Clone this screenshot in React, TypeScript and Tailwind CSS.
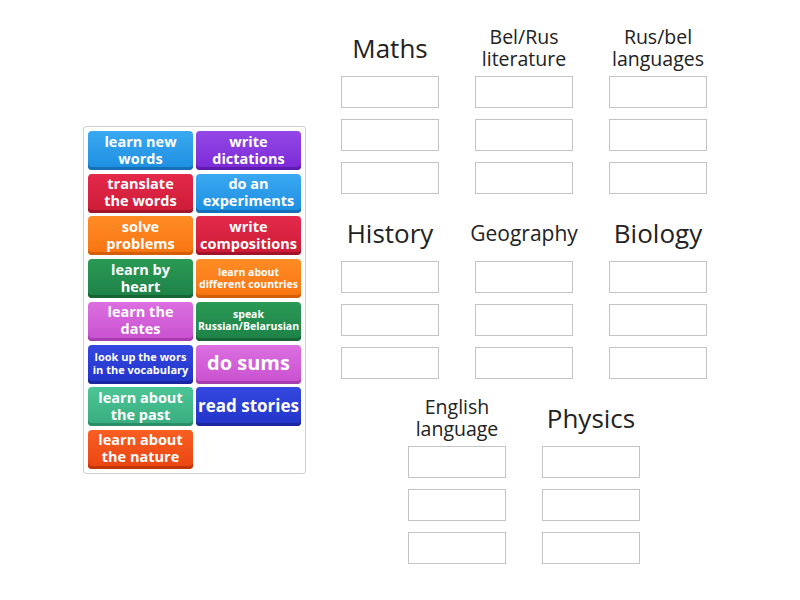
import React from "react";

type Tile = { text: React.ReactNode; cls: string; size: string };

const BLUE = "from-[#3aa9f2] to-[#1b8ee0] shadow-[inset_0_-3px_0_#1670b8]";
const PURPLE = "from-[#9447e6] to-[#7a28d6] shadow-[inset_0_-3px_0_#5f1bb0]";
const RED = "from-[#e4294a] to-[#cc1b37] shadow-[inset_0_-3px_0_#a2142a]";
const ORANGE = "from-[#ff8c24] to-[#f77410] shadow-[inset_0_-3px_0_#d55f08]";
const GREEN = "from-[#2a9a55] to-[#1d8146] shadow-[inset_0_-3px_0_#156535]";
const PINK = "from-[#dc6fe0] to-[#c850cf] shadow-[inset_0_-3px_0_#a63cae]";
const NAVY = "from-[#3447e0] to-[#2233c8] shadow-[inset_0_-3px_0_#1a27a0]";
const TEAL = "from-[#4cc596] to-[#38ad7f] shadow-[inset_0_-3px_0_#2b8e66]";
const FIRE = "from-[#f85e22] to-[#e9440f] shadow-[inset_0_-3px_0_#c2350a]";

const N = "text-[14.5px] leading-[17px]";
const S = "text-[11px] leading-[13px]";

const tiles: Tile[] = [
  { text: <>learn new<br />words</>, cls: BLUE, size: N },
  { text: <>write<br />dictations</>, cls: PURPLE, size: N },
  { text: <>translate<br />the words</>, cls: RED, size: N },
  { text: <>do an<br />experiments</>, cls: BLUE, size: N },
  { text: <>solve<br />problems</>, cls: ORANGE, size: N },
  { text: <>write<br />compositions</>, cls: RED, size: N },
  { text: <>learn by<br />heart</>, cls: GREEN, size: N },
  { text: <>learn about<br />different countries</>, cls: ORANGE, size: "text-[10.5px] leading-[12px]" },
  { text: <>learn the<br />dates</>, cls: PINK, size: N },
  { text: <>speak<br />Russian/Belarusian</>, cls: GREEN, size: "text-[10.5px] leading-[12px]" },
  { text: <>look up the wors<br />in the vocabulary</>, cls: NAVY, size: S },
  { text: <>do sums</>, cls: PINK, size: "text-[20px] leading-[22px]" },
  { text: <>learn about<br />the past</>, cls: TEAL, size: N },
  { text: <>read stories</>, cls: NAVY, size: "text-[17px] leading-[20px]" },
  { text: <>learn about<br />the nature</>, cls: FIRE, size: N },
];

type Group = { title: React.ReactNode; tsize: string };

const rows: Group[][] = [
  [
    { title: "Maths", tsize: "text-[26px] leading-[30px]" },
    { title: <>Bel/Rus<br />literature</>, tsize: "text-[19.5px] leading-[22px]" },
    { title: <>Rus/bel<br />languages</>, tsize: "text-[19.5px] leading-[22px]" },
  ],
  [
    { title: "History", tsize: "text-[26px] leading-[30px]" },
    { title: "Geography", tsize: "text-[21px] leading-[26px]" },
    { title: "Biology", tsize: "text-[26px] leading-[30px]" },
  ],
  [
    { title: <>English<br />language</>, tsize: "text-[19.5px] leading-[22px]" },
    { title: "Physics", tsize: "text-[26px] leading-[30px]" },
  ],
];

function GroupBox({ g }: { g: Group }) {
  return (
    <div className="flex w-[98px] flex-col">
      <div className="flex h-[56px] items-center justify-center">
        <div className={`whitespace-nowrap text-center text-[#222] ${g.tsize}`}>{g.title}</div>
      </div>
      <div className="flex flex-col gap-[11px]">
        {[0, 1, 2].map((i) => (
          <div key={i} className="h-[32px] w-[98px] border border-[#c4c4c4] bg-white" />
        ))}
      </div>
    </div>
  );
}

export default function App() {
  return (
    <div
      className="flex h-[600px] w-[800px] bg-white"
      style={{ fontFamily: '"Open Sans", "Noto Sans", sans-serif' }}
    >
      <div className="ml-[83px] flex items-center">
        <div className="rounded-[3px] border border-[#cfcfcf] bg-white p-[4px]">
          <div className="grid grid-cols-[105px_105px] gap-x-[3px] gap-y-[3.7px]">
            {tiles.map((t, i) => (
              <div
                key={i}
                className={`flex h-[39px] items-center justify-center rounded-[4px] bg-gradient-to-b pb-[2px] text-center font-bold text-white ${t.cls} ${t.size}`}
              >
                <span className="whitespace-nowrap">{t.text}</span>
              </div>
            ))}
          </div>
        </div>
      </div>
      <div className="ml-[34px] mt-[20px] flex w-[368px] flex-col items-center gap-[11px]">
        {rows.map((r, ri) => (
          <div key={ri} className="flex gap-[36px]">
            {r.map((g, gi) => (
              <GroupBox key={gi} g={g} />
            ))}
          </div>
        ))}
      </div>
    </div>
  );
}
